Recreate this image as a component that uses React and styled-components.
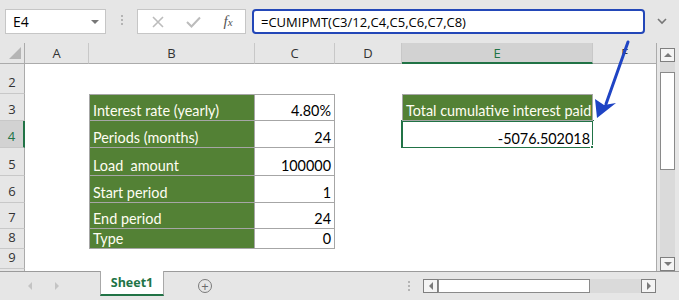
import styled, { createGlobalStyle } from 'styled-components';

const GlobalStyle = createGlobalStyle`
  html, body { margin: 0; padding: 0; background: #e6e6e6; }
  body { font-family: "Open Sans", "Noto Sans", sans-serif; color: #000; }
`;

const GREEN = '#538135';
const XL = '#217346';
const LINE = '#a6a6a6';

const Window = styled.div`
  position: relative;
  width: 679px;
  height: 300px;
  background: #e6e6e6;
  overflow: hidden;
  display: flex;
  flex-direction: column;
`;

/* ---------- formula bar ---------- */
const Toolbar = styled.div`
  height: 43px;
  flex: none;
  box-sizing: border-box;
  padding: 9px 0 0 5px;
  display: flex;
  align-items: flex-start;
`;

const NameBox = styled.div`
  width: 101px;
  height: 25px;
  box-sizing: border-box;
  background: #fff;
  border: 1px solid #c6c6c6;
  display: flex;
  align-items: center;
  justify-content: space-between;
  padding: 0 6px 0 7px;
  font-size: 14px;
`;

const Caret = styled.span`
  width: 0;
  height: 0;
  border-left: 4px solid transparent;
  border-right: 4px solid transparent;
  border-top: 4px solid #777;
`;

const Dots = styled.div`
  width: 3px;
  margin: ${p => p.$margin};
  display: flex;
  flex-direction: column;
  gap: 2px;
  & > i {
    width: 2px;
    height: 2px;
    background: #b4b4b4;
  }
`;

const FxBox = styled.div`
  width: 109px;
  height: 25px;
  box-sizing: border-box;
  background: #fff;
  border: 1px solid #c6c6c6;
  display: flex;
  align-items: center;
  padding-left: 10px;
  gap: 15px;
`;

const FxIcon = styled.span`
  width: 20px;
  display: flex;
  justify-content: center;
  align-items: baseline;
  font-family: "Liberation Serif", serif;
  font-style: italic;
  font-size: 15px;
  color: #555;
`;

const FormulaBox = styled.div`
  width: 393px;
  height: 25px;
  margin-left: 6px;
  box-sizing: border-box;
  background: #fff;
  border: 2px solid #2347b8;
  border-radius: 4px;
  display: flex;
  align-items: center;
  padding-left: 7px;
  font-size: 13px;
  white-space: nowrap;
`;

const Chevron = styled.svg`
  margin: 9px 0 0 12px;
`;

/* ---------- sheet ---------- */
const SheetArea = styled.div`
  height: 229px;
  flex: none;
  display: flex;
  border-bottom: 1px solid #9b9b9b;
  box-sizing: border-box;
`;

const Grid = styled.div`
  width: 657px;
  flex: none;
  display: grid;
  grid-template-columns: 25px 64px 166px 80px 67px 191px 64px;
  grid-template-rows: 21px 30px 27px 27px 28px 27px 26px 20px 20px 20px;
  background: #fff;
  overflow: hidden;
  border-right: 1px solid #ababab;
  box-sizing: border-box;
`;

const Corner = styled.div`
  background: #e6e6e6;
  border-right: 1px solid #ababab;
  border-bottom: 1px solid #ababab;
  box-sizing: border-box;
  position: relative;
  &::after {
    content: '';
    position: absolute;
    right: 3px;
    bottom: 4px;
    border-left: 12px solid transparent;
    border-bottom: 12px solid #b5b5b5;
  }
`;

const ColHead = styled.div`
  background: ${p => (p.$active ? '#d2d2d2' : '#e6e6e6')};
  color: ${p => (p.$active ? XL : '#333')};
  border-right: 1px solid #c8c8c8;
  border-bottom: ${p => (p.$active ? `2px solid ${XL}` : '1px solid #ababab')};
  box-sizing: border-box;
  display: flex;
  align-items: center;
  justify-content: center;
  font-size: 13px;
`;

const RowHead = styled.div`
  background: ${p => (p.$active ? '#d2d2d2' : '#e6e6e6')};
  color: ${p => (p.$active ? XL : '#333')};
  border-right: ${p => (p.$active ? `2px solid ${XL}` : '1px solid #ababab')};
  border-bottom: 1px solid #c8c8c8;
  box-sizing: border-box;
  display: flex;
  align-items: flex-end;
  justify-content: center;
  padding-bottom: 2px;
  font-size: 13px;
`;

const Cell = styled.div`
  position: relative;
  z-index: ${p => (p.$green ? 1 : 0)};
  box-sizing: border-box;
  display: flex;
  align-items: flex-end;
  justify-content: ${p => (p.$right ? 'flex-end' : 'flex-start')};
  padding: 0 3px 1px;
  font-family: Lato, "Open Sans", sans-serif;
  font-size: 14.4px;
  white-space: pre;
  background: ${p => (p.$green ? GREEN : '#fff')};
  color: ${p => (p.$green ? '#fffdf2' : '#000')};
  border-top: ${p => (p.$top ? `1px solid ${LINE}` : 'none')};
  border-left: ${p => (p.$left ? `1px solid ${LINE}` : 'none')};
  border-right: ${p => (p.$boxed ? `1px solid ${LINE}` : 'none')};
  border-bottom: ${p => (p.$boxed ? `1px solid ${LINE}` : 'none')};
  ${p => p.$selected && `box-shadow: 0 0 0 1px ${XL}, inset 0 0 0 1px ${XL};`}
`;

const FillHandle = styled.span`
  position: absolute;
  right: -4px;
  bottom: -4px;
  width: 5px;
  height: 5px;
  background: ${XL};
  border: 1px solid #fff;
`;

/* ---------- vertical scrollbar ---------- */
const VScroll = styled.div`
  flex: 1;
  display: flex;
  flex-direction: column;
  padding: 5px 0 0 3px;
`;

const ScrollBtn = styled.div`
  width: 15px;
  height: 14px;
  flex: none;
  box-sizing: border-box;
  background: #f4f4f4;
  border: 1px solid #7f7f7f;
  display: flex;
  align-items: center;
  justify-content: center;
`;

const Arrow = styled.span`
  width: 0;
  height: 0;
  ${p => p.$dir === 'up' && 'border-left: 4px solid transparent; border-right: 4px solid transparent; border-bottom: 4px solid #7a7a7a;'}
  ${p => p.$dir === 'down' && 'border-left: 4px solid transparent; border-right: 4px solid transparent; border-top: 4px solid #7a7a7a;'}
  ${p => p.$dir === 'left' && 'border-top: 4px solid transparent; border-bottom: 4px solid transparent; border-right: 4px solid #7a7a7a;'}
  ${p => p.$dir === 'right' && 'border-top: 4px solid transparent; border-bottom: 4px solid transparent; border-left: 4px solid #7a7a7a;'}
  ${p => p.$faint && 'border-left-color: #c4c4c4; border-right-color: #c4c4c4;'}
`;

const VTrack = styled.div`
  width: 15px;
  flex: 1;
  background: #dadada;
  padding-top: 10px;
  box-sizing: border-box;
`;

const VThumb = styled.div`
  height: 98px;
  box-sizing: border-box;
  background: #fff;
  border: 1px solid #8a8a8a;
`;

/* ---------- sheet tabs ---------- */
const TabBar = styled.div`
  flex: 1;
  display: flex;
  align-items: flex-start;
`;

const TabNav = styled.div`
  width: 100px;
  height: 28px;
  display: flex;
  align-items: center;
  padding-left: 28px;
  gap: 23px;
  box-sizing: border-box;
`;

const SheetTab = styled.div`
  width: 64px;
  height: 25px;
  margin-top: -1px;
  box-sizing: border-box;
  background: #fff;
  border-left: 1px solid #a8a8a8;
  border-right: 1px solid #a8a8a8;
  border-bottom: 2px solid ${XL};
  display: flex;
  align-items: center;
  justify-content: center;
  font-size: 12.5px;
  font-weight: 700;
  color: ${XL};
`;

const AddSheet = styled.div`
  width: 14px;
  height: 14px;
  margin: 7px 0 0 34px;
  box-sizing: border-box;
  border: 1px solid #7a7a7a;
  border-radius: 50%;
  display: flex;
  align-items: center;
  justify-content: center;
  font-size: 13px;
  line-height: 1;
  color: #6a6a6a;
`;

const HScroll = styled.div`
  display: flex;
  margin: 7px 0 0 12px;
  height: 14px;
`;

const HTrack = styled.div`
  width: 203px;
  background: #dadada;
`;

const HThumb = styled.div`
  width: 152px;
  height: 14px;
  box-sizing: border-box;
  background: #fff;
  border: 1px solid #8a8a8a;
`;

const Overlay = styled.svg`
  position: absolute;
  left: 0;
  top: 0;
  pointer-events: none;
`;

const COLS = ['A', 'B', 'C', 'D', 'E', 'F'];
const ROWS = [2, 3, 4, 5, 6, 7, 8, 9, 10];

const TABLE = {
  3: ['Interest rate (yearly)', '4.80%'],
  4: ['Periods (months)', '24'],
  5: ['Load  amount', '100000'],
  6: ['Start period', '1'],
  7: ['End period', '24'],
  8: ['Type', '0'],
};

function renderCell(row, col) {
  const key = `${col}${row}`;
  const data = TABLE[row];
  if (data && col === 'B') {
    return (
      <Cell key={key} $green $boxed $left $top={row === 3}>
        {data[0]}
      </Cell>
    );
  }
  if (data && col === 'C') {
    return (
      <Cell key={key} $right $boxed $top={row === 3}>
        {data[1]}
      </Cell>
    );
  }
  if (key === 'E3') {
    return (
      <Cell key={key} $green $top $left $boxed>
        Total cumulative interest paid
      </Cell>
    );
  }
  if (key === 'E4') {
    return (
      <Cell key={key} $right $selected>
        -5076.502018
        <FillHandle />
      </Cell>
    );
  }
  return <Cell key={key} />;
}

export default function App() {
  return (
    <Window>
      <GlobalStyle />
      <Toolbar>
        <NameBox>
          E4
          <Caret />
        </NameBox>
        <Dots $margin="6px 13px 0 15px">
          <i />
          <i />
          <i />
        </Dots>
        <FxBox>
          <FxIcon>
            <svg width="12" height="12" viewBox="0 0 12 12">
              <path d="M1 1 L11 11 M11 1 L1 11" stroke="#bcbcbc" strokeWidth="1.6" />
            </svg>
          </FxIcon>
          <FxIcon>
            <svg width="15" height="12" viewBox="0 0 15 12">
              <path d="M1 6 L5.5 10.5 L14 1.5" stroke="#bcbcbc" strokeWidth="2" fill="none" />
            </svg>
          </FxIcon>
          <FxIcon>
            f<span style={{ fontSize: 11 }}>x</span>
          </FxIcon>
        </FxBox>
        <FormulaBox>=CUMIPMT(C3/12,C4,C5,C6,C7,C8)</FormulaBox>
        <Chevron width="10" height="7" viewBox="0 0 10 7">
          <path d="M1 1 L5 5 L9 1" stroke="#777" strokeWidth="1.6" fill="none" />
        </Chevron>
      </Toolbar>

      <SheetArea>
        <Grid>
          <Corner />
          {COLS.map(c => (
            <ColHead key={c} $active={c === 'E'}>
              {c}
            </ColHead>
          ))}
          {ROWS.map(r => [
            <RowHead key={`h${r}`} $active={r === 4}>
              {r < 10 ? r : ''}
            </RowHead>,
            ...COLS.map(c => renderCell(r, c)),
          ])}
        </Grid>
        <VScroll>
          <ScrollBtn>
            <Arrow $dir="up" />
          </ScrollBtn>
          <VTrack>
            <VThumb />
          </VTrack>
          <ScrollBtn>
            <Arrow $dir="down" />
          </ScrollBtn>
        </VScroll>
      </SheetArea>

      <TabBar>
        <TabNav>
          <Arrow $dir="left" $faint />
          <Arrow $dir="right" $faint />
        </TabNav>
        <SheetTab>Sheet1</SheetTab>
        <AddSheet>+</AddSheet>
        <Dots $margin="9px 0 0 196px">
          <i />
          <i />
          <i />
        </Dots>
        <HScroll>
          <ScrollBtn>
            <Arrow $dir="left" />
          </ScrollBtn>
          <HTrack>
            <HThumb />
          </HTrack>
          <ScrollBtn>
            <Arrow $dir="right" />
          </ScrollBtn>
        </HScroll>
      </TabBar>

      <Overlay width="679" height="300" viewBox="0 0 679 300">
        <path d="M628 42 L606 104" stroke="#1f44c4" strokeWidth="3" strokeLinecap="round" />
        <polygon points="597,118 595,99 604,105 616,103" fill="#1f44c4" />
      </Overlay>
    </Window>
  );
}
